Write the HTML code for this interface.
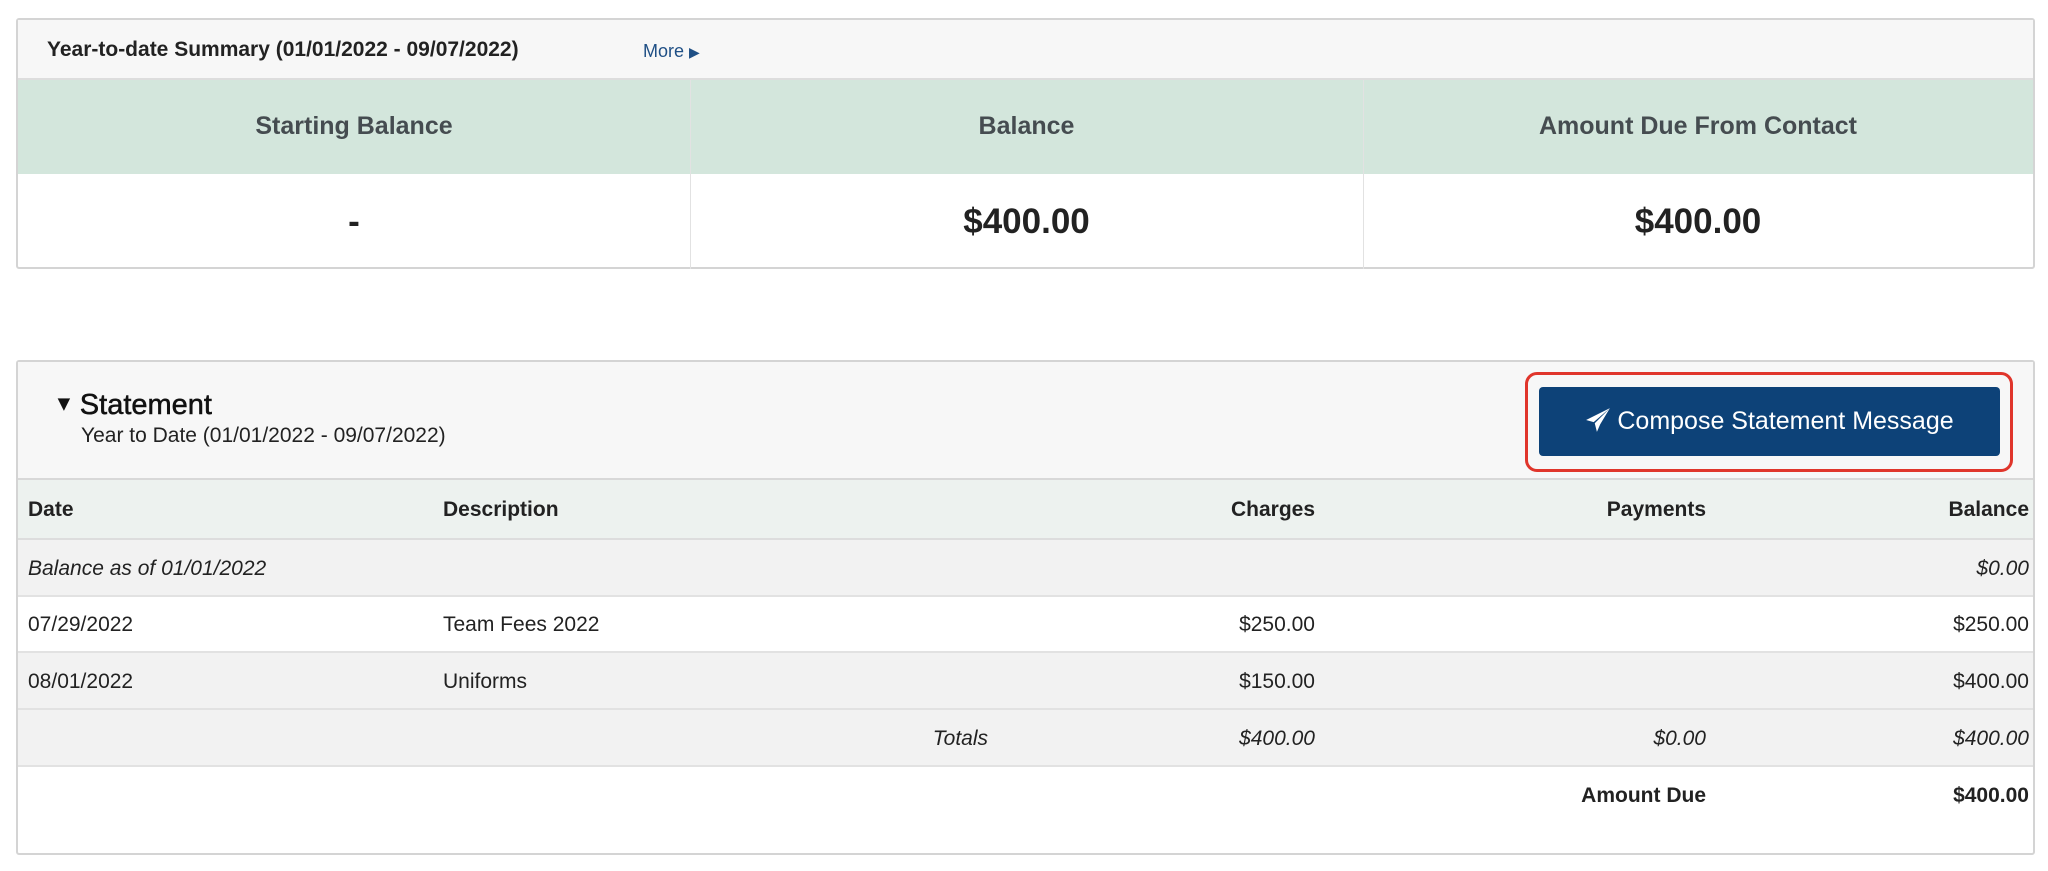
<!DOCTYPE html>
<html><head><style>
*{box-sizing:border-box;margin:0;padding:0}
body{width:2048px;height:871px;background:#fff;font-family:"Liberation Sans",sans-serif;color:#222;position:relative;overflow:hidden}
.box{position:absolute;left:16px;width:2019px;border:2px solid #d4d4d4;border-radius:3px;background:#fff}
.abs{position:absolute}
.r{text-align:right}
</style></head><body>
<div class="box" style="top:18px;height:251px">
  <div class="abs" style="left:0;top:0;width:2015px;height:60px;background:#f7f7f7;border-bottom:2px solid #ddd"></div>
  <div class="abs" style="left:29px;top:18px;font-size:21px;font-weight:bold;color:#222">Year-to-date Summary (01/01/2022 - 09/07/2022)</div>
  <div class="abs" style="left:625px;top:21px;font-size:18px;color:#1f4f85">More <span style="font-size:14px">&#9654;</span></div>
  <div class="abs" style="left:0;top:60px;width:2015px;height:94px;background:#d3e6dc"></div>
  <div class="abs" style="left:672px;top:60px;width:1px;height:189px;background:#e2e2e2"></div>
  <div class="abs" style="left:1345px;top:60px;width:1px;height:189px;background:#e2e2e2"></div>
  <div class="abs" style="left:0;top:92px;width:672px;text-align:center;font-size:25px;font-weight:bold;color:#454c50">Starting Balance</div>
  <div class="abs" style="left:672px;top:92px;width:673px;text-align:center;font-size:25px;font-weight:bold;color:#454c50">Balance</div>
  <div class="abs" style="left:1345px;top:92px;width:670px;text-align:center;font-size:25px;font-weight:bold;color:#454c50">Amount Due From Contact</div>
  <div class="abs" style="left:0;top:182px;width:672px;text-align:center;font-size:35px;font-weight:bold">-</div>
  <div class="abs" style="left:672px;top:182px;width:673px;text-align:center;font-size:35px;font-weight:bold">$400.00</div>
  <div class="abs" style="left:1345px;top:182px;width:670px;text-align:center;font-size:35px;font-weight:bold">$400.00</div>
</div>

<div class="box" style="top:360px;height:495px;font-size:21px">
  <div class="abs" style="left:0;top:0;width:2015px;height:118px;background:#f7f7f7;border-bottom:2px solid #d8d8d8"></div>
  <div class="abs" style="left:36px;top:27px;font-size:29px;color:#111;-webkit-text-stroke:0.5px #111"><span style="font-size:20px;position:relative;top:-4px;margin-right:6px">&#9660;</span>Statement</div>
  <div class="abs" style="left:63px;top:62px;font-size:21px">Year to Date (01/01/2022 - 09/07/2022)</div>
  <div class="abs" style="left:1507px;top:10px;width:488px;height:100px;border:3px solid #e0352b;border-radius:12px"></div>
  <div class="abs" style="left:1521px;top:25px;width:461px;height:69px;background:#0d4278;border-radius:4px;color:#fff;font-size:25px;line-height:69px;text-align:center">
    <svg width="26" height="26" viewBox="0 0 24 24" style="vertical-align:-4px;margin-right:6px"><path d="M23 1 L1 12 L8 14 Z M23 1 L9 15 L11 23 L14 16 Z" fill="#fff"/></svg>Compose Statement Message</div>
  <div class="abs" style="left:0;top:118px;width:2015px;height:60px;background:#edf2ef;border-bottom:2px solid #ddd"></div>
  <div class="abs" style="left:0;top:178px;width:2015px;height:57px;background:#f2f2f2;border-bottom:2px solid #e2e2e2"></div>
  <div class="abs" style="left:0;top:235px;width:2015px;height:56px;background:#fff;border-bottom:2px solid #e2e2e2"></div>
  <div class="abs" style="left:0;top:291px;width:2015px;height:57px;background:#f2f2f2;border-bottom:2px solid #e2e2e2"></div>
  <div class="abs" style="left:0;top:348px;width:2015px;height:57px;background:#f2f2f2;border-bottom:2px solid #e2e2e2"></div>

  <div class="abs" style="left:10px;top:136px;font-weight:bold">Date</div>
  <div class="abs" style="left:425px;top:136px;font-weight:bold">Description</div>
  <div class="abs r" style="left:1000px;width:297px;top:136px;font-weight:bold">Charges</div>
  <div class="abs r" style="left:1400px;width:288px;top:136px;font-weight:bold">Payments</div>
  <div class="abs r" style="left:1800px;width:211px;top:136px;font-weight:bold">Balance</div>

  <div class="abs" style="left:10px;top:195px;font-style:italic">Balance as of 01/01/2022</div>
  <div class="abs r" style="left:1800px;width:211px;top:195px;font-style:italic">$0.00</div>

  <div class="abs" style="left:10px;top:251px">07/29/2022</div>
  <div class="abs" style="left:425px;top:251px">Team Fees 2022</div>
  <div class="abs r" style="left:1000px;width:297px;top:251px">$250.00</div>
  <div class="abs r" style="left:1800px;width:211px;top:251px">$250.00</div>

  <div class="abs" style="left:10px;top:308px">08/01/2022</div>
  <div class="abs" style="left:425px;top:308px">Uniforms</div>
  <div class="abs r" style="left:1000px;width:297px;top:308px">$150.00</div>
  <div class="abs r" style="left:1800px;width:211px;top:308px">$400.00</div>

  <div class="abs r" style="left:700px;width:270px;top:365px;font-style:italic">Totals</div>
  <div class="abs r" style="left:1000px;width:297px;top:365px;font-style:italic">$400.00</div>
  <div class="abs r" style="left:1400px;width:288px;top:365px;font-style:italic">$0.00</div>
  <div class="abs r" style="left:1800px;width:211px;top:365px;font-style:italic">$400.00</div>

  <div class="abs r" style="left:1400px;width:288px;top:422px;font-weight:bold">Amount Due</div>
  <div class="abs r" style="left:1800px;width:211px;top:422px;font-weight:bold">$400.00</div>
</div>
</body></html>
